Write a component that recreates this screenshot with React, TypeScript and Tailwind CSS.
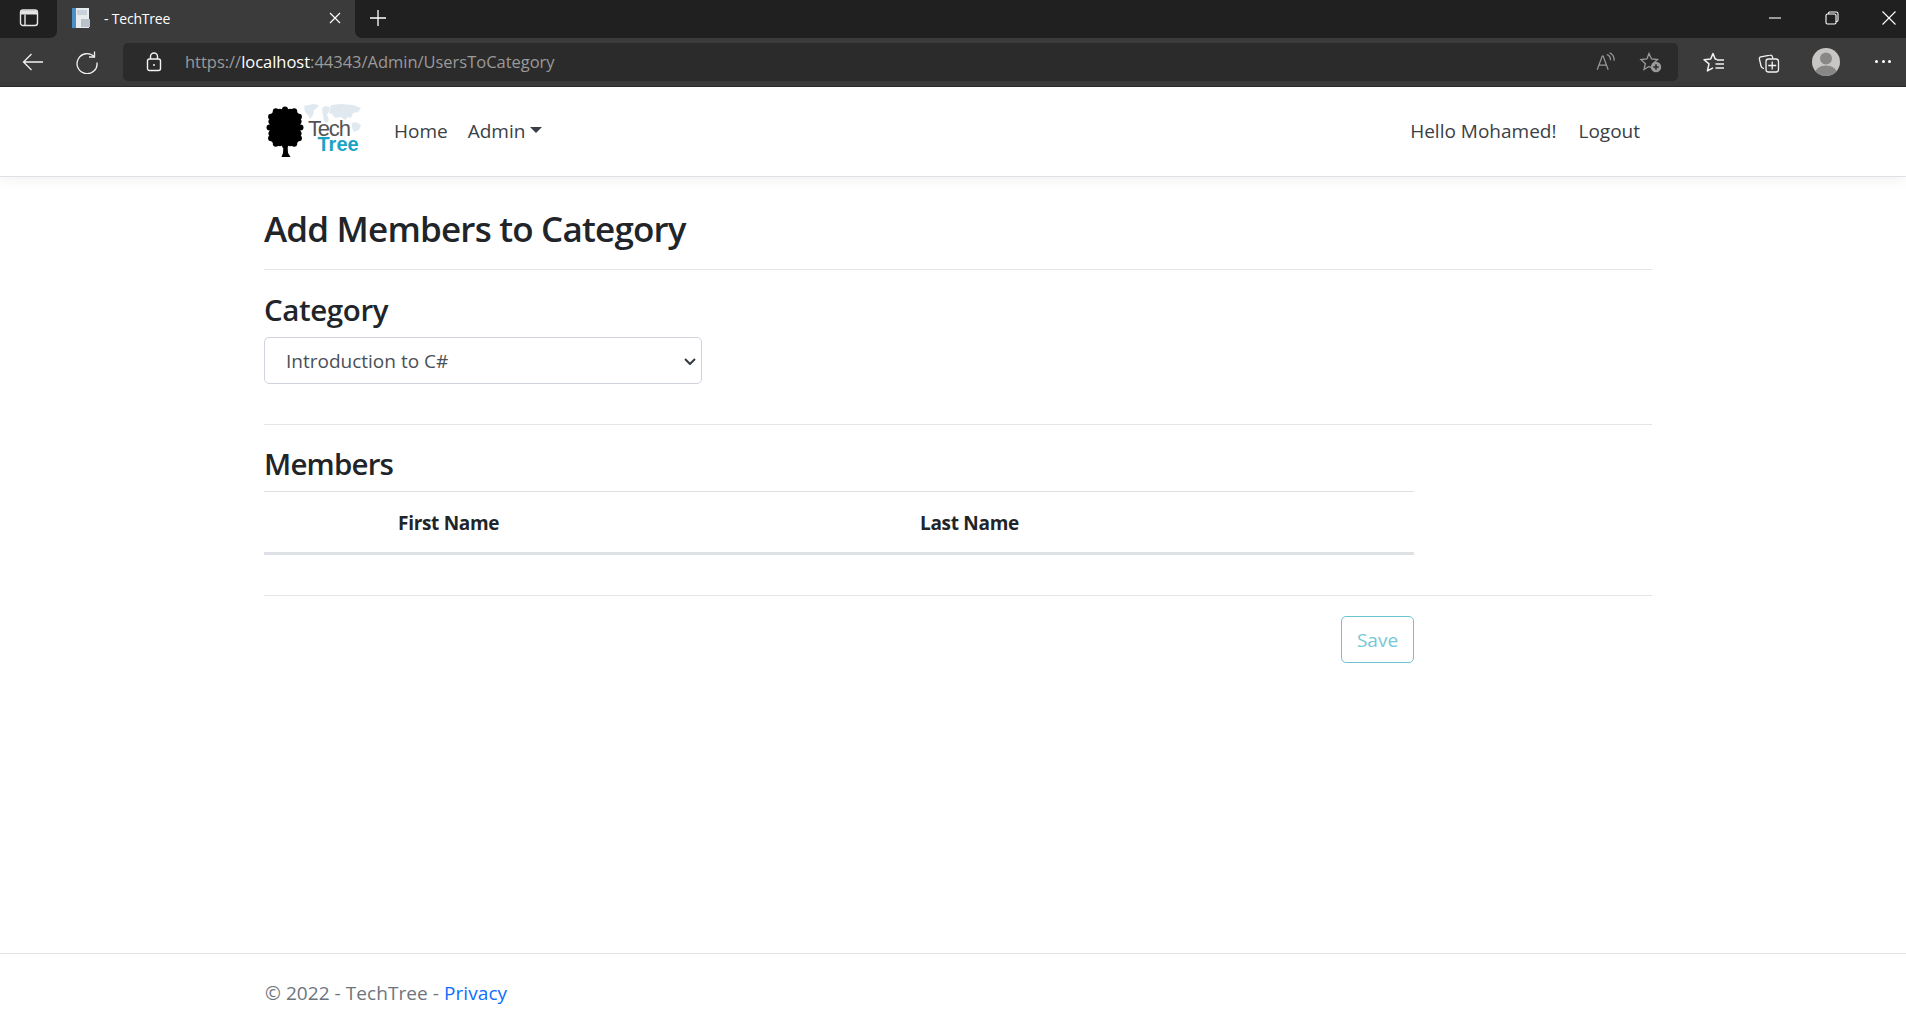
const font = "font-['Open_Sans',sans-serif]"

function Icon({ className, size = 24, children }: { className?: string; size?: number; children: React.ReactNode }) {
	return (
		<svg width={size} height={size} viewBox="0 0 24 24" fill="none" stroke="currentColor" strokeWidth="1.3" className={className}>
			{children}
		</svg>
	)
}

function TabStrip() {
	return (
		<div className="flex h-[38px] bg-[#3b3b3b] text-white">
			<div className="flex w-[57px] items-center justify-center rounded-br-[7px] bg-[#202020] pb-[3px]">
				<svg width="20" height="20" viewBox="0 0 20 20" fill="none" stroke="#e6e6e6" strokeWidth="1.4">
					<rect x="1.500" y="2" width="17" height="15.500" rx="2.500" />
					<path d="M6 6.500v11" />
					<path d="M2 6.500V4.500C2 3.300 2.800 2.500 4 2.500h12c1.200 0 2 .8 2 2v2z" fill="#e6e6e6" stroke="none" />
				</svg>
			</div>
			<div className="flex h-full w-[298px] items-center rounded-t-[7px] bg-[#3b3b3b] pb-[2px] pl-[13px] pr-[14px]">
				<svg width="22" height="22" viewBox="0 0 22 22">
					<rect x="2" y="1" width="17" height="20" fill="#e8ecef" />
					<rect x="2" y="1" width="4" height="20" fill="#4a90c8" />
					<rect x="7" y="3" width="10" height="5" fill="#c9d2da" />
					<rect x="11" y="12" width="9" height="8" fill="#b9c2ca" />
				</svg>
				<span className="ml-[12px] flex-1 text-[14px] tracking-[-0.2px] text-white">- TechTree</span>
				<svg width="12" height="12" viewBox="0 0 12 12" stroke="white" strokeWidth="1.2">
					<path d="M1 1l10 10M11 1L1 11" />
				</svg>
			</div>
			<div className="flex flex-1 rounded-bl-[7px] bg-[#202020] pb-[3px]">
				<div className="flex w-[46px] items-center justify-center">
					<svg width="18" height="18" viewBox="0 0 18 18" stroke="white" strokeWidth="1.3">
						<path d="M9 1v16M1 9h16" />
					</svg>
				</div>
				<div className="flex-1" />
				<div className="flex items-center gap-[43px] pr-[10px]">
					<svg width="14" height="14" viewBox="0 0 14 14" stroke="white" strokeWidth="1.100">
						<path d="M1 7h12" />
					</svg>
					<svg width="14" height="14" viewBox="0 0 14 14" fill="none" stroke="white" strokeWidth="1.100">
						<rect x="1" y="3" width="10" height="10" rx="1.500" />
						<path d="M3.500 3V2.200C3.500 1.500 4 1 4.700 1h6.500C12.300 1 13 1.700 13 2.800v6.500c0 .7-.5 1.200-1.200 1.200H11" />
					</svg>
					<svg width="14" height="14" viewBox="0 0 14 14" stroke="white" strokeWidth="1.100">
						<path d="M.5.500l13 13M13.500.500l-13 13" />
					</svg>
				</div>
			</div>
		</div>
	)
}

function Toolbar() {
	return (
		<div className="flex h-[49px] items-center border-b border-[#2b2b2b] bg-[#3b3b3b] pb-[1px] text-[#f2f2f2]">
			<div className="flex w-[123px] items-center pl-[21px]">
				<Icon>
					<path d="M22 12H2.500M10.500 4l-8 8 8 8" />
				</Icon>
				<Icon className="ml-[30px]">
					<path d="M19.500 1.500V7H14" />
					<path d="M19.500 7A10 10 0 1 0 22 12.500" />
				</Icon>
			</div>
			<div className="flex h-[38px] w-[1555px] items-center rounded-[5px] bg-[#2b2b2b] pl-[23px] pr-[15px]">
				<svg width="16" height="20" viewBox="0 0 16 20" fill="none" stroke="#f2f2f2" strokeWidth="1.400">
					<rect x="1.500" y="7" width="13" height="11.500" rx="2" />
					<path d="M4.500 7V4.500a3.500 3.500 0 0 1 7 0V7" />
					<circle cx="8" cy="13" r="1" fill="#f2f2f2" stroke="none" />
				</svg>
				<span className="ml-[23px] flex-1 pt-[1px] text-[16.500px] tracking-[-0.02px] text-[#9a9a9a]">
					https://<span className="text-white">localhost</span>:44343/Admin/UsersToCategory
				</span>
				<Icon size={22} className="mr-[23px] text-[#9a9a9a]">
					<path d="M3.500 20.500L9 5.500h1l5.500 15M5.500 15.500h8" />
					<path d="M14 4c2 .5 4 3 4 6M17 2c3 1 5 4.500 5 8.500" />
				</Icon>
				<svg width="24" height="24" viewBox="0 0 24 24" fill="none" stroke="#9a9a9a" strokeWidth="1.300">
					<path d="M10 3.500l2.500 5.500 6 .6-4.500 4.100 1.400 5.800L10 16.500l-5 3 1.400-5.800L1.900 9.600l6-.6z" />
					<circle cx="17" cy="17" r="5.200" fill="#9a9a9a" stroke="none" />
					<path d="M17 14.300v5.400M14.300 17h5.400" stroke="#2b2b2b" strokeWidth="1.500" />
				</svg>
			</div>
			<div className="flex flex-1 items-center pl-[23px]">
				<svg width="24" height="24" viewBox="0 0 24 24" fill="none" stroke="#f2f2f2" strokeWidth="1.500" strokeLinejoin="round">
					<path d="M16 9.500l-1.800-.4L12 3.500 9.700 8.900 3 9.700l5 4.200-1.600 7 5.600-3" />
					<path d="M16 10h7M14.500 14h8.500M14.500 18H23" strokeWidth="1.300" />
				</svg>
				<svg className="ml-[31px]" width="24" height="24" viewBox="0 0 24 24" fill="none" stroke="#f2f2f2" strokeWidth="1.300">
					<rect x="10" y="9" width="12.500" height="13" rx="2.500" />
					<path d="M16.200 11.500v8M12.200 15.500h8" />
					<path d="M17 8.500l-.8-2.200c-.3-.9-1.100-1.400-2-1.200L4.800 6.800c-1 .2-1.600 1.100-1.400 2.100L5 16c.3 1.300 1.500 2.400 3 2.600" />
				</svg>
				<svg className="ml-[32px]" width="28" height="28" viewBox="0 0 28 28">
					<defs>
						<clipPath id="avatar">
							<circle cx="14" cy="14" r="14" />
						</clipPath>
					</defs>
					<g clipPath="url(#avatar)">
						<rect width="28" height="28" fill="#c8c6c4" />
						<circle cx="14" cy="10.500" r="6" fill="#8a8886" />
						<ellipse cx="14" cy="25" rx="11" ry="7.500" fill="#8a8886" />
					</g>
				</svg>
				<div className="ml-[35px] flex gap-[3.500px]">
					<span className="h-[3px] w-[3px] rounded-full bg-white" />
					<span className="h-[3px] w-[3px] rounded-full bg-white" />
					<span className="h-[3px] w-[3px] rounded-full bg-white" />
				</div>
			</div>
		</div>
	)
}

// lumpy tree crown, squarer than an ellipse
const crownBumps = Array.from({ length: 24 }, (_, i) => {
	const a = (i / 24) * Math.PI * 2
	const c = Math.cos(a)
	const s = Math.sin(a)
	const k = i % 2 === 0 ? 1 : 0.9
	return {
		cx: 21 + Math.sign(c) * Math.pow(Math.abs(c), 0.75) * 15.500 * k,
		cy: 24.500 + Math.sign(s) * Math.pow(Math.abs(s), 0.75) * 18 * k,
	}
})

function Logo() {
	return (
		<svg width="100" height="58" viewBox="0 0 100 58" className="shrink-0">
			<defs>
				<filter id="soft">
					<feGaussianBlur stdDeviation="0.600" />
				</filter>
			</defs>
			<g fill="#e1e9f0" filter="url(#soft)">
				<path d="M40 3l9-2 6 1-2 3-3 2-1 5-3 4-2-4-3-3z" />
				<path d="M58 5l3-2 5 1-1 4-2 4 2 5-2 3-3-2-1-5z" />
				<path d="M67 2l10-1 12 1 8 3-3 4-5 1-2 5-3-1-3 3-4-3-6 1-3-4-3-1z" />
				<path d="M88 20l4-1 5 3-2 5-5 2-2-4z" />
			</g>
			<g fill="#000">
				<ellipse cx="21" cy="24.500" rx="15.500" ry="18" />
				{crownBumps.map((b) => (
					<circle key={b.cx + "-" + b.cy} cx={b.cx} cy={b.cy} r="3" />
				))}
				<path d="M19.500 42h4l.5 8 2.500 4h-9l1.500-4z" />
			</g>
			<text x="44" y="32.500" fontFamily="'Liberation Sans',sans-serif" fontSize="22" letterSpacing="-1.200" fill="#545454">
				Tech
			</text>
			<text x="53.500" y="48" fontFamily="'Liberation Sans',sans-serif" fontSize="20" fontWeight="700" fill="#1ba3c6">
				Tree
			</text>
		</svg>
	)
}

function Navbar() {
	return (
		<nav className="relative flex h-[90px] items-center border-b border-[#dee2e6] pl-[264px] pr-[266px] text-[19px] text-[#3a4046] shadow-[0_4px_12px_rgba(0,0,0,0.05)]">
			<Logo />
			<a className="ml-[30px]">Home</a>
			<a className="ml-[20px] flex items-center">
				Admin
				<span className="ml-[5px] mb-[3px] border-x-[6px] border-t-[6px] border-x-transparent border-t-[#3a4046]" />
			</a>
			<div className="flex-1" />
			<span>Hello Mohamed!</span>
			<a className="ml-[22px]">Logout</a>
		</nav>
	)
}

export default function App() {
	return (
		<div className={`flex min-h-[1022px] flex-col bg-white ${font}`}>
			<TabStrip />
			<Toolbar />
			<Navbar />
			<main className="ml-[264px] w-[1388px] flex-1 text-[#212529]">
				<h1 className="flex h-[93px] items-end border-b border-[#e4e5e6] pb-[16px] text-[35px] leading-[48px] font-semibold tracking-[-0.8px]">
					Add Members to Category
				</h1>
				<h2 className="mt-[13px] text-[29.500px] leading-[54px] font-semibold tracking-[-0.4px]">Category</h2>
				<div className="relative w-[438px]">
					<select className="block h-[47px] w-full appearance-none rounded-[5px] border border-[#ced4da] bg-white pl-[21px] pt-[2px] text-[19px] text-[#495057]">
						<option>Introduction to C#</option>
					</select>
					<svg className="absolute right-[6px] top-[21px]" width="12" height="7" viewBox="0 0 12 7" fill="none" stroke="#343a40" strokeWidth="2">
						<path d="M1 1l5 5 5-5" />
					</svg>
				</div>
				<hr className="mt-[40px] border-[#e4e5e6]" />
				<h2 className="mt-[14px] text-[29.500px] leading-[50px] font-semibold tracking-[-0.8px]">Members</h2>
				<table className="mt-[2px] w-[1150px] table-fixed border-t border-[#dee2e6]">
					<thead>
						<tr className="h-[62px] border-b-[3px] border-[#dee2e6] text-left text-[19px] font-bold">
							<th className="w-[121px]" />
							<th className="w-[521px] pl-[13px] pt-[3px] tracking-[-0.3px]">First Name</th>
							<th className="pl-[14px] pt-[3px] tracking-[-0.3px]">Last Name</th>
						</tr>
					</thead>
				</table>
				<hr className="mt-[40px] border-[#e4e5e6]" />
				<div className="mt-[20px] flex w-[1150px] justify-end">
					<button className="h-[47px] w-[73px] rounded-[5px] border border-[#6cc4d3] pt-[2px] text-[19px] text-[#76c8d6]">Save</button>
				</div>
			</main>
			<footer className="flex h-[69px] items-center border-t border-[#e4e5e6] pl-[265px] pt-[10px] text-[19px] tracking-[0.07px] text-[#6c757d]">
				<span>
					© 2022 - TechTree - <a className="text-[#0d6efd]">Privacy</a>
				</span>
			</footer>
		</div>
	)
}
